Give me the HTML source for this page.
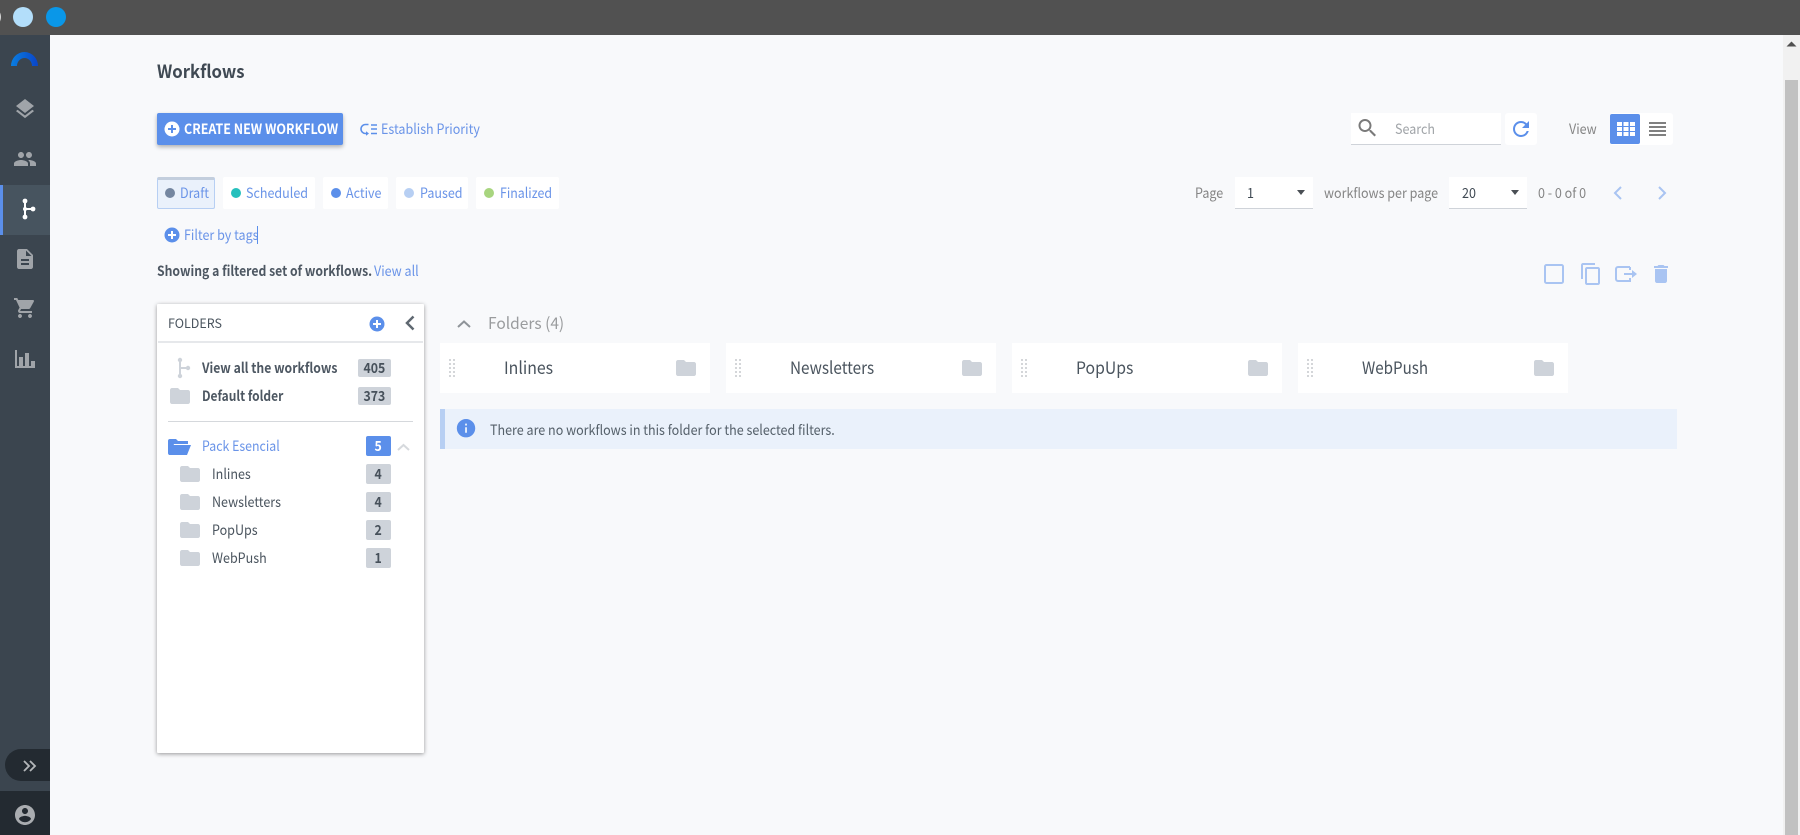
<!DOCTYPE html>
<html><head><meta charset="utf-8"><title>Workflows</title>
<style>
html,body{margin:0;padding:0;width:1800px;height:835px;overflow:hidden;background:#f8f9fb}
body{position:relative;font-family:"Noto Sans CJK JP","Liberation Sans",sans-serif;font-size:14px;color:#4a545e}
.b{position:absolute;box-sizing:border-box}
.t{position:absolute;white-space:nowrap;line-height:20px;height:20px;transform-origin:0 50%;transform:scaleX(.895)}
.bl{color:#6a94e8}.g{color:#858585}.s{font-weight:700;transform:scaleX(.872);color:#4d5762}
.chip{position:absolute;top:177px;height:32px;background:#fff;border-radius:2px}
.badge{position:absolute;background:#ced3da;color:#47515b;font-weight:700;text-align:center;border-radius:2px;font-size:14px}
.badge span{display:inline-block;transform:scaleX(.88)}
.card{position:absolute;top:343px;width:270px;height:50px;background:#fff}
.card .t{left:64px;top:14px;font-size:17px;color:#4a545e;transform:scaleX(.91)}
svg{position:absolute;left:0;top:0}
</style></head><body>
<div class="b" style="left:0;top:0;width:1800px;height:35px;background:#515151"></div>
<div class="b" style="left:-19px;top:7px;width:20px;height:20px;border-radius:50%;background:#d8d8d8"></div>
<div class="b" style="left:13px;top:7px;width:20px;height:20px;border-radius:50%;background:#b3defa"></div>
<div class="b" style="left:46px;top:7px;width:20px;height:20px;border-radius:50%;background:#0a97e8"></div>
<div class="b" style="left:0;top:35px;width:50px;height:800px;background:#3b454f"></div>
<div class="b" style="left:0;top:185px;width:50px;height:50px;background:#47545f;border-left:3px solid #5b8fea"></div>
<div class="b" style="left:0;top:791px;width:50px;height:44px;background:#232a31"></div>
<div class="b" style="left:5px;top:749px;width:45px;height:32px;background:#232a31;border-radius:16px 0 0 16px"></div>
<div class="b" style="left:1783px;top:35px;width:17px;height:800px;background:#f1f1f1"></div>
<div class="b" style="left:1785px;top:80px;width:13px;height:755px;background:#c1c1c1"></div>

<div class="t s" style="left:156.500px;top:61px;font-size:18px;color:#3f4953;transform:scaleX(.927)">Workflows</div>
<div class="b" style="left:157px;top:113px;width:186px;height:32px;background:#5b8fea;border-radius:2px;box-shadow:0 2px 4px rgba(0,0,0,.3)"></div>
<div class="t s" style="left:184px;top:119px;font-size:14px;color:#fff;transform:scaleX(.892)">CREATE NEW WORKFLOW</div>
<div class="t bl" style="left:381px;top:119px">Establish Priority</div>

<div class="chip" style="left:157px;width:58px;background:#eaf1fb;border:1px solid #b7cff3;border-top:3px solid #c3cedd;box-sizing:border-box"></div>
<div class="chip" style="left:223px;width:92px"></div>
<div class="chip" style="left:323px;width:65px"></div>
<div class="chip" style="left:396px;width:72px"></div>
<div class="chip" style="left:476px;width:83px"></div>
<div class="t bl" style="left:179.500px;top:183px">Draft</div>
<div class="t bl" style="left:246px;top:183px">Scheduled</div>
<div class="t bl" style="left:345.500px;top:183px">Active</div>
<div class="t bl" style="left:419.500px;top:183px">Paused</div>
<div class="t bl" style="left:500px;top:183px;transform:scaleX(.885)">Finalized</div>
<div class="t bl" style="left:184px;top:225px">Filter by tags</div>
<div class="b" style="left:257px;top:226px;width:1px;height:18px;background:#5b8fea"></div>
<div class="t s" style="left:156.500px;top:260.500px">Showing a filtered set of workflows.</div>
<div class="t bl" style="left:374px;top:260.500px">View all</div>

<div class="b" style="left:1351px;top:113px;width:150px;height:32px;background:#fff;border-bottom:1px solid #cfd3d9"></div>
<div class="b" style="left:1505px;top:113px;width:32px;height:32px;background:#fff;border-radius:3px"></div>
<div class="t" style="left:1395px;top:119px;color:#a0a4a8">Search</div>
<div class="t g" style="left:1569px;top:119px">View</div>
<div class="b" style="left:1610px;top:113px;width:63px;height:32px;background:#fff;border-radius:3px"></div>
<div class="b" style="left:1610px;top:114px;width:30px;height:30px;background:#5b8fea;border-radius:2px"></div>

<div class="t g" style="left:1195px;top:183px">Page</div>
<div class="b" style="left:1235px;top:177px;width:78px;height:32px;background:#fff;border-bottom:1px solid #cfd3d9"></div>
<div class="t" style="left:1247px;top:183px;color:#3f4953">1</div>
<div class="t g" style="left:1324px;top:183px">workflows per page</div>
<div class="b" style="left:1449px;top:177px;width:78px;height:32px;background:#fff;border-bottom:1px solid #cfd3d9"></div>
<div class="t" style="left:1462px;top:183px;color:#3f4953">20</div>
<div class="t g" style="left:1538px;top:183px">0 - 0 of 0</div>

<div class="b" style="left:157px;top:304px;width:267px;height:449px;background:#fff;box-shadow:0 1px 4px rgba(0,0,0,.4);border-radius:1px"></div>
<div class="b" style="left:158px;top:341px;width:265px;height:2px;background:#e6e8eb"></div>
<div class="t" style="left:168px;top:313px;font-size:13px;color:#4a545e;transform:scaleX(.96)">FOLDERS</div>
<div class="t s" style="left:201.500px;top:358px">View all the workflows</div>
<div class="t s" style="left:201.500px;top:386px;transform:scaleX(.855)">Default folder</div>
<div class="badge" style="left:358px;top:359px;width:33px;height:18px;line-height:18px"><span>405</span></div>
<div class="badge" style="left:358px;top:387px;width:33px;height:18px;line-height:18px"><span>373</span></div>
<div class="b" style="left:168px;top:421px;width:245px;height:1px;background:#d5d8dc"></div>
<div class="t bl" style="left:202px;top:436px;transform:scaleX(.883)">Pack Esencial</div>
<div class="badge" style="left:366px;top:436px;width:25px;height:20px;line-height:20px;background:#5b8fea;color:#fff"><span>5</span></div>
<div class="t" style="left:211.500px;top:464px">Inlines</div>
<div class="t" style="left:211.500px;top:492px">Newsletters</div>
<div class="t" style="left:211.500px;top:520px">PopUps</div>
<div class="t" style="left:211.500px;top:548px">WebPush</div>
<div class="badge" style="left:366px;top:464px;width:25px;height:20px;line-height:20px"><span>4</span></div>
<div class="badge" style="left:366px;top:492px;width:25px;height:20px;line-height:20px"><span>4</span></div>
<div class="badge" style="left:366px;top:520px;width:25px;height:20px;line-height:20px"><span>2</span></div>
<div class="badge" style="left:366px;top:548px;width:25px;height:20px;line-height:20px"><span>1</span></div>

<div class="t" style="left:488px;top:312px;font-size:16px;color:#9a9c9e;transform:scaleX(.97)">Folders (4)</div>
<div class="card" style="left:440px"><div class="t" style="transform:scaleX(.933)">Inlines</div></div>
<div class="card" style="left:726px"><div class="t" style="transform:scaleX(.9)">Newsletters</div></div>
<div class="card" style="left:1012px"><div class="t" style="transform:scaleX(.926)">PopUps</div></div>
<div class="card" style="left:1298px"><div class="t" style="transform:scaleX(.89)">WebPush</div></div>

<div class="b" style="left:440px;top:409px;width:1237px;height:40px;background:#eaf1fb;border-left:5px solid #b7cff3"></div>
<div class="t" style="left:489.500px;top:420px;color:#55606a">There are no workflows in this folder for the selected filters.</div>

<svg width="1800" height="835" viewBox="0 0 1800 835" xmlns="http://www.w3.org/2000/svg">
<defs>
<linearGradient id="lg" x1="0" x2="1" y1="0" y2="0"><stop offset="0" stop-color="#0a7ee0"/><stop offset="1" stop-color="#0a45c8"/></linearGradient>
<path id="fo" d="M10 4H4c-1.1 0-1.99.9-1.99 2L2 18c0 1.1.9 2 2 2h16c1.1 0 2-.9 2-2V8c0-1.1-.9-2-2-2h-8l-2-2z"/>
<g id="dots" fill="#d4d6d9"><rect x="0" y="0" width="2" height="2"/><rect x="4" y="0" width="2" height="2"/><rect x="0" y="4" width="2" height="2"/><rect x="4" y="4" width="2" height="2"/><rect x="0" y="8" width="2" height="2"/><rect x="4" y="8" width="2" height="2"/><rect x="0" y="12" width="2" height="2"/><rect x="4" y="12" width="2" height="2"/><rect x="0" y="16" width="2" height="2"/><rect x="4" y="16" width="2" height="2"/></g>
</defs>
<path d="M11 66a13.500 14 0 0 1 27 0h-6a7.500 8 0 0 0-15 0z" fill="url(#lg)"/>
<path transform="translate(13,97)" fill="#a0a4a9" d="M11.99 18.54l-7.37-5.73L3 14.07l9 7 9-7-1.63-1.27-7.38 5.74zM12 16l7.36-5.73L21 9l-9-7-9 7 1.63 1.27L12 16z"/>
<path transform="translate(13,147)" fill="#a0a4a9" d="M16 11c1.66 0 2.99-1.34 2.99-3S17.66 5 16 5c-1.66 0-3 1.34-3 3s1.34 3 3 3zm-8 0c1.66 0 2.99-1.34 2.99-3S9.66 5 8 5C6.34 5 5 6.34 5 8s1.34 3 3 3zm0 2c-2.33 0-7 1.17-7 3.5V19h14v-2.5c0-2.33-4.67-3.5-7-3.5zm8 0c-.29 0-.62.02-.97.05 1.16.84 1.97 1.97 1.97 3.45V19h6v-2.5c0-2.33-4.67-3.5-7-3.5z"/>
<g fill="#fff" stroke="#fff"><path d="M25 201V217M25 209H33" stroke-width="2" fill="none"/><circle cx="25" cy="201" r="2.400" stroke="none"/><circle cx="25" cy="217" r="2.400" stroke="none"/><circle cx="33" cy="209" r="2.400" stroke="none"/><circle cx="25" cy="209" r="2" stroke="none"/></g>
<path transform="translate(13,247)" fill="#a0a4a9" d="M14 2H6c-1.1 0-1.99.9-1.99 2L4 20c0 1.1.89 2 1.99 2H18c1.1 0 2-.9 2-2V8l-6-6zm2 16H8v-2h8v2zm0-4H8v-2h8v2zm-3-5V3.5L18.5 9H13z"/>
<path transform="translate(13,296)" fill="#a0a4a9" d="M7 18c-1.1 0-1.99.9-1.99 2S5.9 22 7 22s2-.9 2-2-.9-2-2-2zM1 2v2h2l3.6 7.59-1.35 2.45c-.16.28-.25.61-.25.96 0 1.1.9 2 2 2h12v-2H7.42c-.14 0-.25-.11-.25-.25l.03-.12.9-1.63h7.45c.75 0 1.41-.41 1.75-1.03l3.58-6.49c.08-.14.12-.31.12-.48 0-.55-.45-1-1-1H5.21l-.94-2H1zm16 16c-1.1 0-1.99.9-1.99 2s.89 2 1.99 2 2-.9 2-2-.9-2-2-2z"/>
<g fill="#a0a4a9"><rect x="15" y="350" width="2" height="18"/><rect x="15" y="366" width="20" height="2"/><rect x="19" y="357" width="4" height="10"/><rect x="25" y="353" width="4" height="14"/><rect x="31" y="361" width="4" height="6"/></g>
<path d="M24 761l5 5-5 5M30 761l5 5-5 5" fill="none" stroke="#b4b7ba" stroke-width="1.800"/>
<path transform="translate(13,803)" fill="#a9acb0" d="M12 2C6.48 2 2 6.48 2 12s4.48 10 10 10 10-4.48 10-10S17.52 2 12 2zm0 3c1.66 0 3 1.34 3 3s-1.34 3-3 3-3-1.34-3-3 1.34-3 3-3zm0 14.2c-2.5 0-4.71-1.28-6-3.22.03-1.99 4-3.08 6-3.08 1.99 0 5.97 1.09 6 3.08-1.29 1.94-3.5 3.22-6 3.22z"/>
<path d="M1786.500 46.500l5-5 5 5z" fill="#505050"/>

<circle cx="172" cy="129" r="7.500" fill="#fff"/><path d="M172 125v8M168 129h8" stroke="#5b8fea" stroke-width="2"/>
<path d="M368.500 124.500h-3a4.500 4.500 0 0 0 0 9h2" fill="none" stroke="#5b8fea" stroke-width="1.600"/><path d="M366 131.300l3 2.200-3 2.200z" fill="#5b8fea"/><path d="M371 125h6M371 129h6M371 133.500h6" fill="none" stroke="#5b8fea" stroke-width="1.500"/>

<circle cx="170" cy="193" r="5" fill="#7486a0"/>
<circle cx="236" cy="193" r="5" fill="#26c0bd"/>
<circle cx="336" cy="193" r="5" fill="#5b8fea"/>
<circle cx="409" cy="193" r="5" fill="#b7cff3"/>
<circle cx="489" cy="193" r="5" fill="#a8d57f"/>
<circle cx="172" cy="235" r="7.500" fill="#5b8fea"/><path d="M172 231v8M168 235h8" stroke="#fff" stroke-width="2"/>

<path transform="translate(1355.500,116)" fill="#7a7a7a" d="M15.5 14h-.79l-.28-.27C15.41 12.59 16 11.11 16 9.5 16 5.91 13.09 3 9.5 3S3 5.91 3 9.5 5.91 16 9.5 16c1.61 0 3.09-.59 4.23-1.57l.27.28v.79l5 4.99L20.49 19l-4.99-5zm-6 0C7.01 14 5 11.99 5 9.5S7.01 5 9.5 5 14 7.01 14 9.500 11.99 14 9.500 14z"/>
<path transform="translate(1509,117)" fill="#5b8fea" d="M17.65 6.35C16.2 4.9 14.21 4 12 4c-4.42 0-7.99 3.58-7.99 8s3.57 8 7.99 8c3.73 0 6.84-2.55 7.73-6h-2.08c-.82 2.33-3.04 4-5.65 4-3.31 0-6-2.69-6-6s2.69-6 6-6c1.66 0 3.14.69 4.22 1.78L13 11h7V4l-2.35 2.35z"/>
<g fill="#fff"><rect x="1617" y="122" width="5" height="4"/><rect x="1623.500" y="122" width="5" height="4"/><rect x="1630" y="122" width="5" height="4"/><rect x="1617" y="127" width="5" height="4"/><rect x="1623.500" y="127" width="5" height="4"/><rect x="1630" y="127" width="5" height="4"/><rect x="1617" y="132" width="5" height="4"/><rect x="1623.500" y="132" width="5" height="4"/><rect x="1630" y="132" width="5" height="4"/></g>
<g fill="#808080"><rect x="1649" y="122" width="17" height="2"/><rect x="1649" y="126" width="17" height="2"/><rect x="1649" y="130" width="17" height="2"/><rect x="1649" y="134" width="17" height="2"/></g>

<path d="M1297 190h8l-4 5z" fill="#4a4f55"/><path d="M1511 190h8l-4 5z" fill="#4a4f55"/>
<path d="M1621 187l-6 6 6 6M1659 187l6 6-6 6" fill="none" stroke="#a9c4f2" stroke-width="2"/>

<rect x="1545" y="265" width="18" height="18" rx="1.500" fill="none" stroke="#a9c4f2" stroke-width="2"/>
<path transform="translate(1579,262)" fill="#a9c4f2" d="M16 1H4c-1.1 0-2 .9-2 2v14h2V3h12V1zm3 4H8c-1.1 0-2 .9-2 2v14c0 1.1.9 2 2 2h11c1.1 0 2-.9 2-2V7c0-1.100-.9-2-2-2zm0 16H8V7h11v14z"/>
<path d="M1630 267h-12a2 2 0 0 0-2 2v10a2 2 0 0 0 2 2h12v-3M1630 267v3M1624 274h9" fill="none" stroke="#a9c4f2" stroke-width="2"/><path d="M1632 270l5 4-5 4z" fill="#a9c4f2"/>
<path transform="translate(1649,262)" fill="#a9c4f2" d="M6 19c0 1.100.9 2 2 2h8c1.100 0 2-.9 2-2V7H6v12zM19 4h-3.500l-1-1h-5l-1 1H5v2h14V4z"/>

<circle cx="377" cy="324" r="7.500" fill="#5b8fea"/><path d="M377 320v8M373 324h8" stroke="#fff" stroke-width="2"/>
<path d="M413.500 316.500l-6.500 6.500 6.500 6.500" fill="none" stroke="#5f6871" stroke-width="2.500"/>
<g fill="#ced3da" stroke="#ced3da"><path d="M180 360V376M180 368H188" stroke-width="2" fill="none"/><circle cx="180" cy="360" r="2.200" stroke="none"/><circle cx="180" cy="376" r="2.200" stroke="none"/><circle cx="188" cy="368" r="2.200" stroke="none"/></g>
<use href="#fo" transform="translate(168,384)" fill="#ced3da"/>
<path d="M168 441a2 2 0 0 1 2-2h6l2 2h10v3h-14l-4 11a2 2 0 0 1-2-2z" fill="#5b8fea"/><path d="M173 445h18l-4 10h-18z" fill="#5b8fea"/>
<path d="M398 450l5.500-5 5.500 5" fill="none" stroke="#d6d9dd" stroke-width="2"/>
<use href="#fo" transform="translate(178,462)" fill="#ced3da"/>
<use href="#fo" transform="translate(178,490)" fill="#ced3da"/>
<use href="#fo" transform="translate(178,518)" fill="#ced3da"/>
<use href="#fo" transform="translate(178,546)" fill="#ced3da"/>

<path d="M458 327l6-5.500 6 5.500" fill="none" stroke="#8f9499" stroke-width="2"/>
<use href="#dots" transform="translate(449,359)"/>
<use href="#dots" transform="translate(735,359)"/>
<use href="#dots" transform="translate(1021,359)"/>
<use href="#dots" transform="translate(1307,359)"/>
<use href="#fo" transform="translate(674,356)" fill="#ced3da"/>
<use href="#fo" transform="translate(960,356)" fill="#ced3da"/>
<use href="#fo" transform="translate(1246,356)" fill="#ced3da"/>
<use href="#fo" transform="translate(1532,356)" fill="#ced3da"/>
<path transform="translate(456,418) scale(.92) translate(-1.100,-.9)" fill="#5b8fea" d="M12 2C6.480 2 2 6.480 2 12s4.480 10 10 10 10-4.480 10-10S17.520 2 12 2zm1 15h-2v-6h2v6zm0-8h-2V7h2v2z"/>
</svg>
</body></html>
